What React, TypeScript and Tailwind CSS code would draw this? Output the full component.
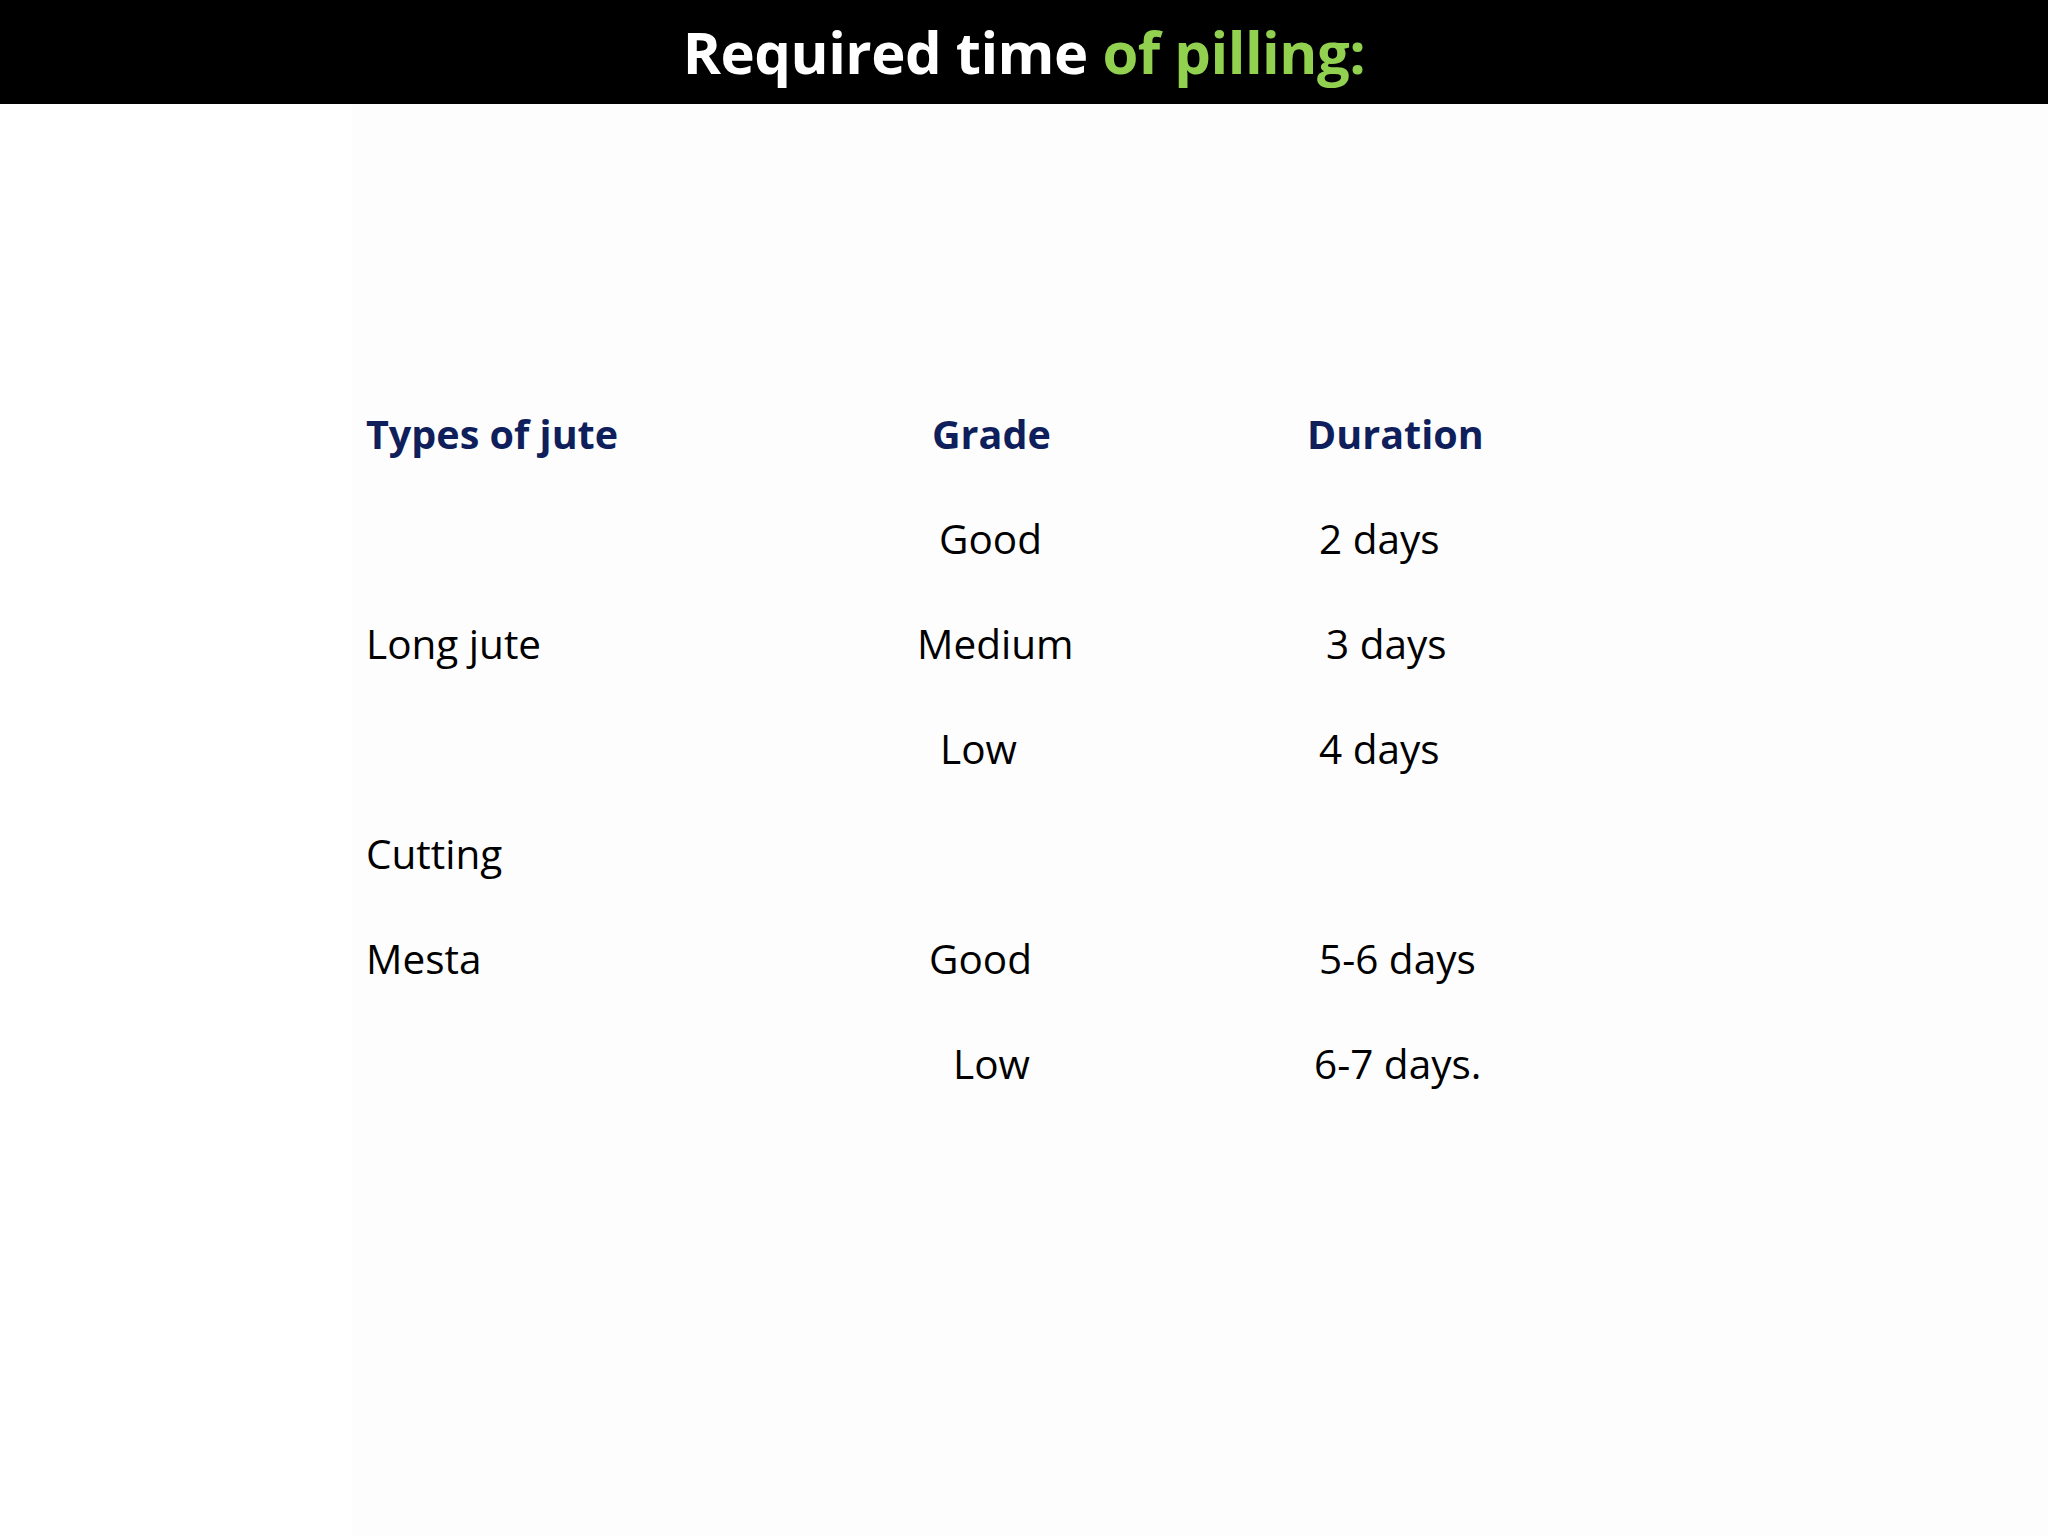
import React from 'react';

type Row = {
    type: string;
    grade: string;
    gradePad: string;
    duration: string;
    durationPad: string;
};

const ROWS: Row[] = [
    { type: '', grade: 'Good', gradePad: 'pl-[22px]', duration: '2 days', durationPad: 'pl-[12px]' },
    { type: 'Long jute', grade: 'Medium', gradePad: 'pl-0', duration: '3 days', durationPad: 'pl-[19px]' },
    { type: '', grade: 'Low', gradePad: 'pl-[23px]', duration: '4 days', durationPad: 'pl-[12px]' },
    { type: 'Cutting', grade: '', gradePad: 'pl-0', duration: '', durationPad: 'pl-0' },
    { type: 'Mesta', grade: 'Good', gradePad: 'pl-[12px]', duration: '5-6 days', durationPad: 'pl-[12px]' },
    { type: '', grade: 'Low', gradePad: 'pl-[36px]', duration: '6-7 days.', durationPad: 'pl-[7px]' },
];

const App: React.FC = () => {
    return (
        <div className="w-[2048px] h-[1536px] flex flex-col bg-white font-['Open_Sans',sans-serif]">
            <header className="h-[104px] bg-black flex items-center justify-center">
                <h1 className="text-[58px] font-bold leading-none tracking-[-0.5px] text-white">
                    Required time <span className="text-[#92d050]">of pilling:</span>
                </h1>
            </header>

            <div className="flex-1 flex">
                <div className="w-[352px] bg-white" />
                <div className="flex-1 bg-[#fdfdfd] pt-[278px] pl-[14px]">
                    <div className="grid grid-cols-[551px_390px_300px] auto-rows-[105px] items-center text-[40.5px] font-medium leading-none text-black">
                        <div className="text-[39.5px] font-bold text-[#0f1f5c]">Types of jute</div>
                        <div className="pl-[15px] text-[39.5px] font-bold text-[#0f1f5c]">Grade</div>
                        <div className="text-[39.5px] font-bold text-[#0f1f5c]">Duration</div>

                        {ROWS.map((row, i) => (
                            <React.Fragment key={i}>
                                <div>{row.type}</div>
                                <div className={row.gradePad}>{row.grade}</div>
                                <div className={row.durationPad}>{row.duration}</div>
                            </React.Fragment>
                        ))}
                    </div>
                </div>
            </div>
        </div>
    );
};

export default App;
